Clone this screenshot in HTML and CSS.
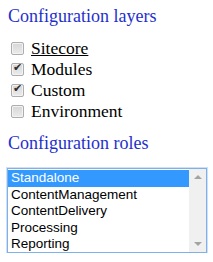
FILE: index.html
```html
<!DOCTYPE html>
<html lang="en">
<head>
    <meta charset="UTF-8">
    <title>Configuration</title>
    <link rel="stylesheet" href="styles.css">
</head>
<body>
    <div class="panel">
        <h2 class="title">Configuration layers</h2>
        <div class="layers">
            <label class="layer"><span class="box"></span><span class="name link">Sitecore</span></label>
            <label class="layer"><span class="box checked"></span><span class="name">Modules</span></label>
            <label class="layer"><span class="box checked"></span><span class="name">Custom</span></label>
            <label class="layer"><span class="box"></span><span class="name">Environment</span></label>
        </div>

        <h2 class="title roles-title">Configuration roles</h2>
        <div class="listbox">
            <div class="options">
                <div class="option selected">Standalone</div>
                <div class="option">ContentManagement</div>
                <div class="option">ContentDelivery</div>
                <div class="option">Processing</div>
                <div class="option">Reporting</div>
            </div>
            <div class="scrollbar">
                <span class="arrow up"></span>
                <span class="arrow down"></span>
            </div>
        </div>
    </div>
</body>
</html>
```

FILE: styles.css
```css
body {
    margin: 0;
    background: #ffffff;
    font-family: 'Liberation Serif', 'Times New Roman', serif;
    color: #000000;
}
.panel {
    padding: 0 6px 0 7px;
}
.title {
    margin: 0;
    padding: 4px 0 0 1px;
    font-size: 18px;
    line-height: 24px;
    font-weight: normal;
    color: #1e30cc;
}
.layers {
    padding: 10px 0 0 4px;
}
.layer {
    display: flex;
    align-items: center;
    gap: 7px;
    height: 21px;
    font-size: 17.5px;
}
.box {
    width: 11px;
    height: 11px;
    border: 1px solid #adadad;
    border-radius: 2px;
    background: linear-gradient(180deg, #d6d6d6 0%, #ebebeb 100%);
    box-shadow: inset 0 0 0 1px #f2f2f2;
    position: relative;
}
.box.checked::after {
    content: '\2714';
    position: absolute;
    left: 1px;
    top: -3px;
    font-family: 'DejaVu Sans', sans-serif;
    font-size: 11px;
    color: #2e2e2e;
}
.link {
    text-decoration: underline;
}
.roles-title {
    padding-top: 9px;
}
.listbox {
    display: flex;
    margin-top: 13px;
    height: 83px;
    border: 1px solid #7eb0ea;
    box-shadow: 0 0 0 1px #cfe0f5;
    font-family: 'Liberation Sans', Arial, sans-serif;
}
.options {
    flex: 1;
    padding-top: 1px;
}
.option {
    height: 16.5px;
    line-height: 16px;
    padding-left: 3px;
    font-size: 13.5px;
}
.option.selected {
    background: #3399ff;
    color: #ffffff;
}
.scrollbar {
    width: 17px;
    background: #f0f0f0;
    display: flex;
    flex-direction: column;
    justify-content: space-between;
    align-items: center;
    padding: 6px 0;
}
.arrow {
    width: 0;
    height: 0;
    border-left: 4px solid transparent;
    border-right: 4px solid transparent;
}
.arrow.up {
    border-bottom: 4px solid #a3a3a3;
}
.arrow.down {
    border-top: 4px solid #a3a3a3;
}
```
